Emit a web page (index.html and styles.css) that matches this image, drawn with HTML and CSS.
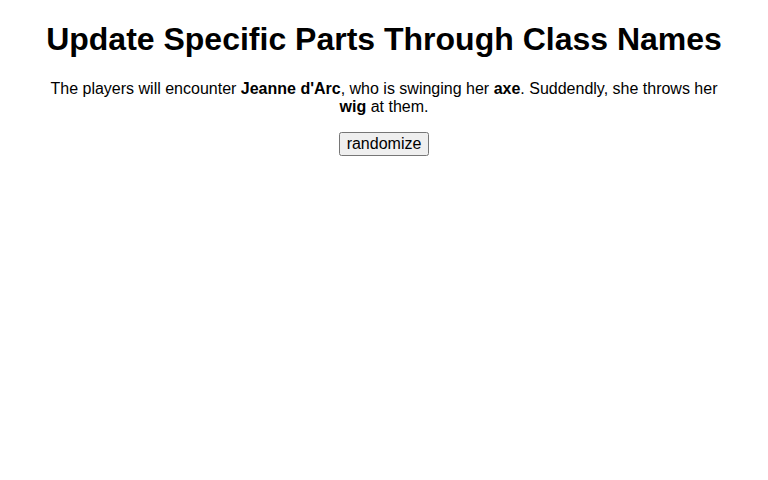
FILE: index.html
```html
<!DOCTYPE html>
<html>
<head>
<meta charset="utf-8">
<link rel="stylesheet" href="styles.css">
</head>
<body>
<main class="page">
  <h1 class="title">Update Specific Parts Through Class Names</h1>
  <p class="story">The players will encounter <b class="name">Jeanne d'Arc</b>, who is swinging her <b class="weapon">axe</b>. Suddendly, she throws her <b class="item">wig</b> at them.</p>
  <button class="btn">randomize</button>
</main>
</body>
</html>
```
FILE: styles.css
```css
html, body {
  margin: 0;
  padding: 0;
  background: #fff;
}
.page {
  font-family: "Liberation Sans", Arial, sans-serif;
  text-align: center;
  padding: 0 40px;
  color: #000;
}
.title {
  font-size: 32px;
  font-weight: bold;
  margin: 21.44px 0;
}
.story {
  font-size: 16px;
  margin: 16px 0;
}
.btn {
  font-family: inherit;
  font-size: 16px;
}
```
